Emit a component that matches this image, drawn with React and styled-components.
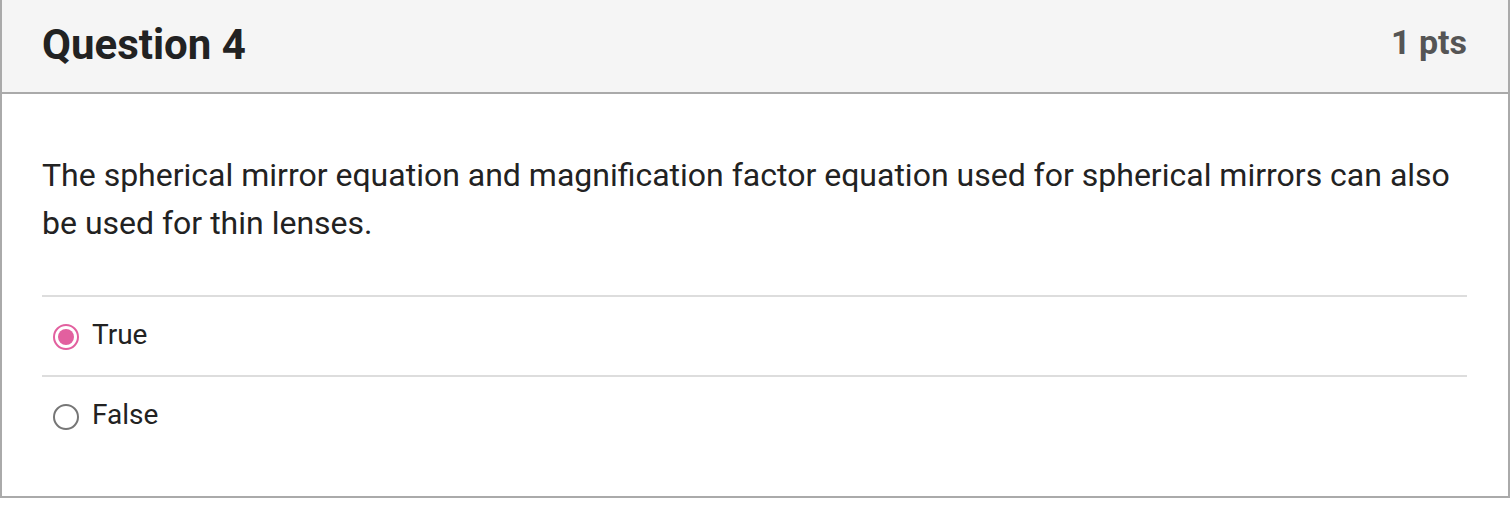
import React, {useState} from 'react';
import styled, {createGlobalStyle} from 'styled-components';

const GlobalStyle = createGlobalStyle`
  body {
    margin: 0;
    background: #ffffff;
    font-family: Roboto, "Liberation Sans", sans-serif;
    color: #222222;
  }
`

const Card = styled.div`
  width: 1510px;
  height: 498px;
  box-sizing: border-box;
  border: 2px solid #aaaaaa;
  border-top: none;
  display: flex;
  flex-direction: column;
`

const Header = styled.div`
  height: 94px;
  box-sizing: border-box;
  background: #f5f5f5;
  border-bottom: 2px solid #aaaaaa;
  display: flex;
  justify-content: space-between;
  align-items: flex-start;
  padding: 0 41px 0 40px;
`

const Title = styled.h2`
  margin: 0;
  padding-top: 20px;
  font-size: 42px;
  line-height: 50px;
  font-weight: 700;
  color: #222222;
`

const Points = styled.div`
  padding-top: 22px;
  font-size: 34px;
  line-height: 40px;
  font-weight: 700;
  color: #555555;
`

const Body = styled.div`
  padding: 57px 41px 0 40px;
`

const Text = styled.p`
  margin: 0 0 48px;
  font-size: 32px;
  line-height: 48px;
  color: #222222;
`

const Answers = styled.div`
  display: flex;
  flex-direction: column;
`

const AnswerRow = styled.label`
  height: 80px;
  box-sizing: border-box;
  border-top: 2px solid #dddddd;
  display: flex;
  align-items: center;
  gap: 13px;
  padding-left: 11px;
  padding-bottom: 4px;
  cursor: pointer;
  font-size: 28px;
  color: #222222;
`

const Radio = styled.span`
  width: 26px;
  height: 26px;
  margin-top: 5px;
  box-sizing: border-box;
  border-radius: 50%;
  border: 2px solid ${props => props.checked ? "#e2609f" : "#767676"};
  display: flex;
  align-items: center;
  justify-content: center;

  &::after {
    content: "";
    width: 16px;
    height: 16px;
    border-radius: 50%;
    background: #e2609f;
    display: ${props => props.checked ? "block" : "none"};
  }
`

const ANSWERS = ["True", "False"];

export default function App() {
    const [selected, setSelected] = useState("True");

    return (
        <>
            <GlobalStyle/>
            <Card>
                <Header>
                    <Title>Question 4</Title>
                    <Points>1 pts</Points>
                </Header>
                <Body>
                    <Text>
                        The spherical mirror equation and magnification factor equation used for spherical mirrors can also be used for thin lenses.
                    </Text>
                    <Answers>
                        {ANSWERS.map(answer => (
                            <AnswerRow key={answer} onClick={() => setSelected(answer)}>
                                <Radio checked={selected === answer}/>
                                {answer}
                            </AnswerRow>
                        ))}
                    </Answers>
                </Body>
            </Card>
        </>
    )
}
